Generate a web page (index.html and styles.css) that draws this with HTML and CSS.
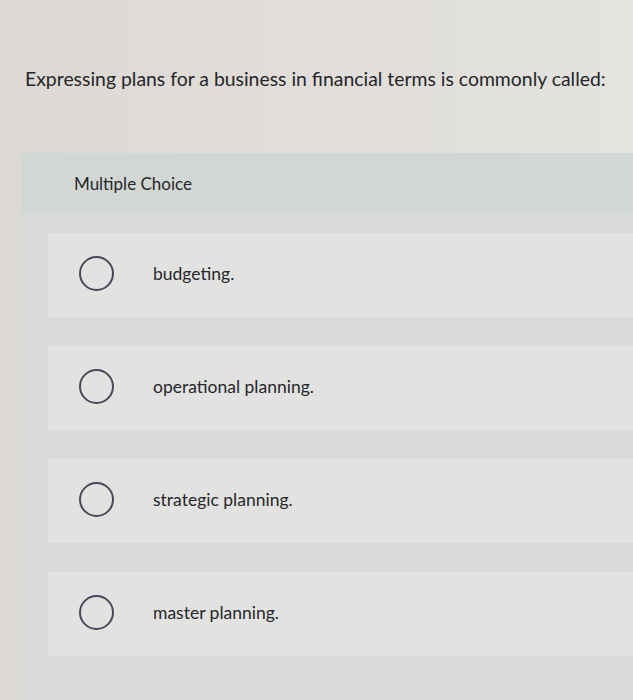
FILE: index.html
```html
<!DOCTYPE html>
<html>
<head>
<meta charset="utf-8">
<link rel="stylesheet" href="styles.css">
</head>
<body>
<div class="page">
  <p class="question">Expressing plans for a business in financial terms is commonly called:</p>
  <section class="panel">
    <div class="panel-head">Multiple Choice</div>
    <div class="options">
      <label class="option"><span class="radio"></span><span class="opt-text">budgeting.</span></label>
      <label class="option"><span class="radio"></span><span class="opt-text">operational planning.</span></label>
      <label class="option"><span class="radio"></span><span class="opt-text">strategic planning.</span></label>
      <label class="option"><span class="radio"></span><span class="opt-text">master planning.</span></label>
    </div>
  </section>
</div>
</body>
</html>
```
FILE: styles.css
```css
html, body {
  margin: 0;
  padding: 0;
}
body {
  width: 633px;
  height: 700px;
  overflow: hidden;
  background: linear-gradient(90deg, #dcd9d4 0%, #e1ddd8 45%, #e3e3df 100%);
  font-family: Lato, "Liberation Sans", sans-serif;
  color: #26262b;
}
.page {
  padding-top: 66px;
}
.question {
  margin: 0 0 0 25px;
  font-size: 19.4px;
  line-height: 26px;
  height: 26px;
  white-space: nowrap;
}
.panel {
  margin: 61px 0 0 21px;
  background: #d9dbd8;
  height: 547px;
}
.panel-head {
  height: 60px;
  background: #d3d7d4;
  display: flex;
  align-items: center;
  padding-left: 53px;
  font-size: 17px;
}
.options {
  padding: 20px 0 0 27px;
  display: flex;
  flex-direction: column;
  gap: 29px;
}
.option {
  height: 84px;
  background: #e2e3e0;
  display: flex;
  align-items: center;
  padding-bottom: 3px;
  box-sizing: border-box;
}
.radio {
  width: 31px;
  height: 31px;
  border: 2px solid #474a58;
  border-radius: 50%;
  margin-left: 31px;
  flex: none;
}
.opt-text {
  margin-left: 39px;
  font-size: 17.5px;
}
```
